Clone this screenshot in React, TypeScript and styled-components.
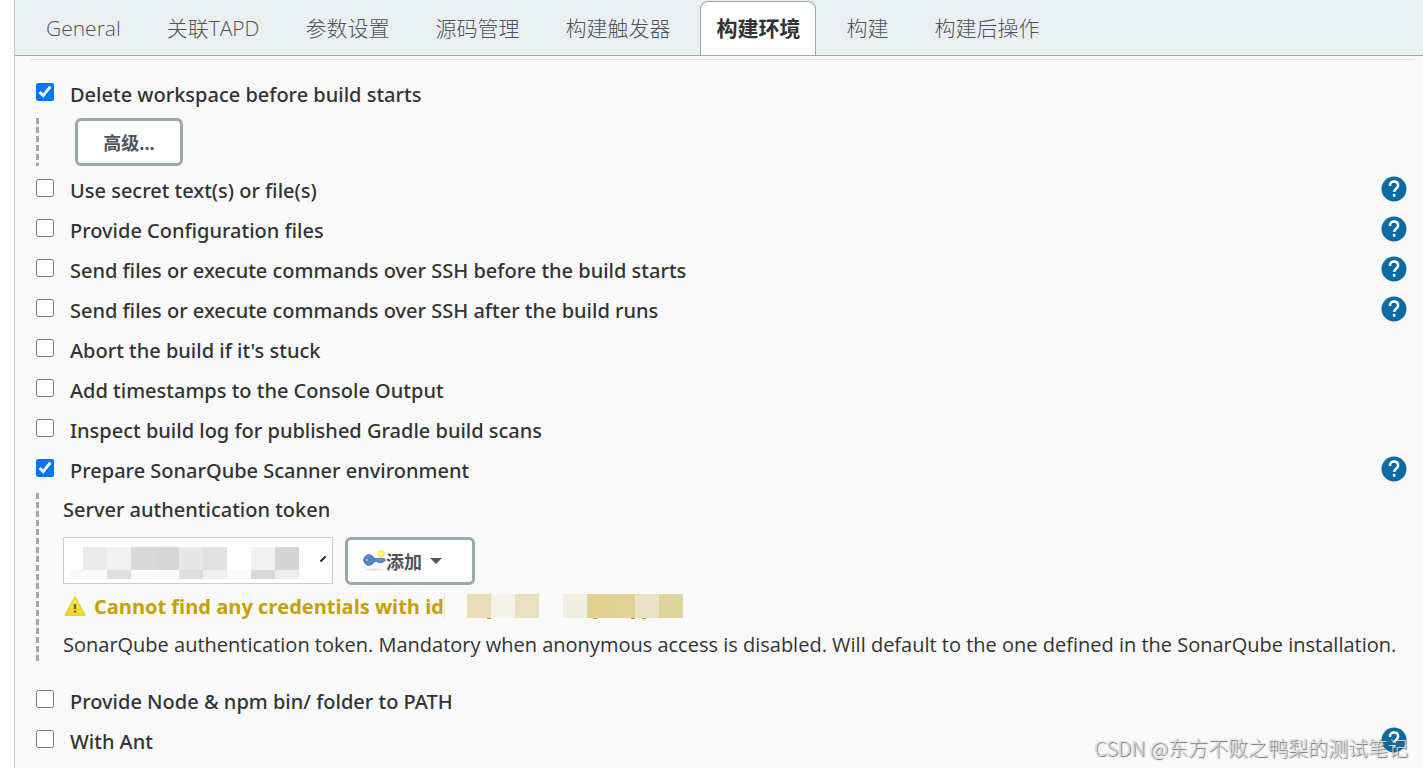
import React from "react";
import styled, { createGlobalStyle } from "styled-components";

const GlobalStyle = createGlobalStyle`
  *, *::before, *::after { box-sizing: border-box; }
  body {
    margin: 0;
    background: #fff;
    color: #333;
    font-family: "Open Sans", "Noto Sans CJK SC", sans-serif;
    font-size: 20px;
  }
  button, select, input { font: inherit; color: inherit; }
`;

const Page = styled.main`
  position: relative;
  min-height: 100vh;
  margin-left: 14px;
  border-left: 1px solid #c8c8c8;
  background: #f9f9f9;
  overflow: hidden;
`;

const TabBar = styled.nav`
  display: flex;
  gap: 14px;
  height: 56px;
  padding: 1px 15px 0;
  background: #eaeff2;
  border-bottom: 1px solid #9aa8b0;
`;

const Tab = styled.a<{ $active?: boolean }>`
  padding: 0 15px;
  border: 1px solid ${(p) => (p.$active ? "#9aa8b0" : "transparent")};
  border-bottom: 0;
  border-radius: 8px 8px 0 0;
  background: ${(p) => (p.$active ? "#fff" : "transparent")};
  color: ${(p) => (p.$active ? "#333" : "#4d545d")};
  font-size: 21px;
  font-weight: ${(p) => (p.$active ? 700 : 300)};
  line-height: 52px;
  text-decoration: none;
  white-space: nowrap;
`;

const Rule = styled.hr`
  height: 1px;
  margin: 3px 8px 14px 15px;
  border: 0;
  background: #dedede;
`;

const Form = styled.form`
  padding: 0 16px 0 21px;
`;

const Row = styled.div`
  display: flex;
  align-items: flex-start;
  height: 40px;
`;

const Check = styled.input`
  width: 18px;
  height: 18px;
  margin: 9px 16px 0 0;
`;

const CheckLabel = styled.label`
  flex: 1;
  font-family: "Noto Sans", "Noto Sans CJK SC", sans-serif;
  font-weight: 500;
  line-height: 42px;
`;

const HelpButton = styled.button`
  display: flex;
  width: 26px;
  height: 26px;
  margin-top: 6px;
  padding: 0;
  border: 0;
  background: none;
`;

const Nested = styled.div<{ $indent: number }>`
  display: flex;
  flex-direction: column;
  align-items: flex-start;
  padding-left: ${(p) => p.$indent}px;
  background: repeating-linear-gradient(#a6a6a6 0 6px, transparent 6px 9px) left top / 3px 100% no-repeat;
`;

const AdvancedBlock = styled(Nested)`
  margin: 4px 0;
`;

const TokenBlock = styled(Nested)`
  margin: 3px 0 20px;
`;

const Button = styled.button<{ $width: number }>`
  display: flex;
  align-items: center;
  justify-content: center;
  width: ${(p) => p.$width}px;
  height: 48px;
  padding: 0;
  border: 3px solid #9aa8b0;
  border-radius: 6px;
  background: #fff;
  color: #4d545d;
  font-size: 18px;
  font-weight: 700;
`;

const AddButton = styled(Button)`
  justify-content: flex-start;
  padding-left: 15px;
`;

const Caret = styled.span`
  margin-left: 8px;
  border: 6px solid transparent;
  border-top-color: #4d545d;
  border-bottom: 0;
`;

const FieldLabel = styled.label`
  font-family: "Noto Sans", "Noto Sans CJK SC", sans-serif;
  font-weight: 500;
  line-height: 34px;
`;

const Controls = styled.div`
  display: flex;
  gap: 12px;
  margin-top: 10px;
`;

const SelectBox = styled.div`
  position: relative;
  width: 270px;
  height: 47px;
`;

const Select = styled.select`
  width: 100%;
  height: 100%;
  border: 1px solid #ccc;
  border-radius: 0;
  background: #fff;
  appearance: none;
`;

const SelectCover = styled.svg`
  position: absolute;
  inset: 0;
  pointer-events: none;
`;

const Warning = styled.p`
  display: flex;
  align-items: center;
  height: 28px;
  margin: 7px 0 0;
  color: #c4a000;
  font-weight: 700;
`;

const WarningText = styled.span`
  margin-left: 7px;
`;

const Description = styled.p`
  margin: 0;
  padding: 9px 0 0;
  line-height: 32px;
`;

const Watermark = styled.div`
  position: absolute;
  right: 15px;
  bottom: 6px;
  color: rgba(255, 255, 255, 0.7);
  font-family: "Noto Sans CJK SC", sans-serif;
  font-size: 20px;
  font-weight: 300;
  line-height: 28px;
  text-shadow: 1px 1px 1px rgba(80, 80, 80, 0.8), 0 0 1px rgba(110, 110, 110, 0.6);
  pointer-events: none;
`;

const Help = ({ topic }: { topic: string }) => (
  <HelpButton type="button" aria-label={`Help for feature: ${topic}`}>
    <svg width="26" height="26" viewBox="0 0 26 26">
      <circle cx="13" cy="13" r="12.5" fill="#0b6aa2" />
      <path
        d="M8.900 10C8.900 7 10.600 5.600 13 5.600s4.100 1.500 4.100 3.900c0 3-3.900 3.200-3.900 6.400"
        fill="none"
        stroke="#fff"
        strokeWidth="2.5"
      />
      <rect x="11.900" y="18" width="2.600" height="2.700" fill="#fff" />
    </svg>
  </HelpButton>
);

const KeyIcon = () => (
  <svg width="23" height="22" viewBox="0 0 23 22" aria-hidden="true">
    <ellipse cx="11" cy="19.500" rx="10" ry="1.200" fill="#e4e4e4" />
    <circle cx="18" cy="3.800" r="2.700" fill="#fffbb8" stroke="#fbf04a" strokeWidth="2.200" />
    <path
      d="M10 8.400h11l1.700 1.600-1.700 1.700h-1.500v1h-1.500v-1h-1v1h-1.500v-1H10z"
      fill="#5c8fd0"
      stroke="#3c68ac"
      strokeWidth=".8"
    />
    <circle cx="6" cy="10" r="5.300" fill="#5485c6" stroke="#3c68ac" strokeWidth=".9" />
    <ellipse cx="3.900" cy="10" rx="1.200" ry="1.700" fill="#fff" stroke="#31589a" strokeWidth=".8" />
  </svg>
);

const WarningIcon = () => (
  <svg width="24" height="24" viewBox="0 0 24 24" aria-hidden="true">
    <path d="M12 3.500 21.500 21h-19z" fill="#f3dc2c" stroke="#ead040" strokeWidth="2" strokeLinejoin="round" />
    <path d="M12 5.500 17 14H7z" fill="#fbf07a" opacity=".6" />
    <path d="M12 10v5M12 16.500v2" stroke="#77702c" strokeWidth="2.600" />
  </svg>
);

const CELL = 24;
const upperCells = ["#ebeae8", "#f0f0f0", "#d8dad9", "#d6d7d9", "#e7e8ea", "#e0e1e3", "#fff", "#f1f1f2", "#d4d5d8"];
const lowerCells = ["#fafafa", "#dfdfdf", "#fbfbfb", "#fafafa", "#dfdedd", "#f0f0ee", "#fbfbfb", "#d9d8d7", "#ededee"];
const idCells = ["#e8ddb5", "#f5f2ea", "#eae0bf", "none", "#f0eee1", "#e1d193", "#e1d396", "#e9e2c6", "#e0d49d"];

const HiddenCredential = () => (
  <SelectCover width="270" height="47" aria-hidden="true">
    {upperCells.map((fill, i) => (
      <rect key={i} x={20 + i * CELL} y="10" width={CELL} height="23" fill={fill} />
    ))}
    <rect x="7" y="33" width="13" height="9" fill="#f7f7f7" />
    {lowerCells.map((fill, i) => (
      <rect key={i} x={20 + i * CELL} y="33" width={CELL} height="9" fill={fill} />
    ))}
    <path d="M257.500 24.500 262.500 19.500" stroke="#222" strokeWidth="2" />
  </SelectCover>
);

const HiddenId = () => (
  <svg width="241" height="28" aria-hidden="true">
    <rect x="0" y="0" width="1" height="26" fill="#eee6cf" />
    {idCells.map((fill, i) => (
      <rect key={i} x={23 + i * CELL} y="2" width={CELL} height="24" fill={fill} />
    ))}
    {[43, 149, 187, 198].map((x) => (
      <rect key={x} x={x} y="26" width="4" height="1" fill="#c4a000" />
    ))}
  </svg>
);

const tabs = ["General", "关联TAPD", "参数设置", "源码管理", "构建触发器", "构建环境", "构建", "构建后操作"];

const Option = ({ id, label, help, checked }: { id: string; label: string; help?: boolean; checked?: boolean }) => (
  <Row>
    <Check type="checkbox" id={id} defaultChecked={checked} />
    <CheckLabel htmlFor={id}>{label}</CheckLabel>
    {help && <Help topic={label} />}
  </Row>
);

export default function App() {
  return (
    <>
      <GlobalStyle />
      <Page>
        <TabBar>
          {tabs.map((t) => (
            <Tab key={t} href="#" $active={t === "构建环境"}>
              {t}
            </Tab>
          ))}
        </TabBar>
        <Rule />
        <Form>
          <Option id="clean" label="Delete workspace before build starts" checked />
          <AdvancedBlock $indent={39}>
            <Button type="button" $width={108}>
              高级...
            </Button>
          </AdvancedBlock>
          <Option id="secret" label="Use secret text(s) or file(s)" help />
          <Option id="config" label="Provide Configuration files" help />
          <Option id="ssh-before" label="Send files or execute commands over SSH before the build starts" help />
          <Option id="ssh-after" label="Send files or execute commands over SSH after the build runs" help />
          <Option id="abort" label="Abort the build if it's stuck" />
          <Option id="timestamps" label="Add timestamps to the Console Output" />
          <Option id="gradle" label="Inspect build log for published Gradle build scans" />
          <Option id="sonar" label="Prepare SonarQube Scanner environment" help checked />
          <TokenBlock $indent={27}>
            <FieldLabel htmlFor="token">Server authentication token</FieldLabel>
            <Controls>
              <SelectBox>
                <Select id="token" />
                <HiddenCredential />
              </SelectBox>
              <AddButton type="button" $width={130}>
                <KeyIcon />
                添加
                <Caret />
              </AddButton>
            </Controls>
            <Warning>
              <WarningIcon />
              <WarningText>Cannot find any credentials with id</WarningText>
              <HiddenId />
            </Warning>
            <Description>
              SonarQube authentication token. Mandatory when anonymous access is disabled. Will default to the one
              defined in the SonarQube installation.
            </Description>
          </TokenBlock>
          <Option id="node" label="Provide Node & npm bin/ folder to PATH" />
          <Option id="ant" label="With Ant" help />
        </Form>
        <Watermark>CSDN @东方不败之鸭梨的测试笔记</Watermark>
      </Page>
    </>
  );
}
